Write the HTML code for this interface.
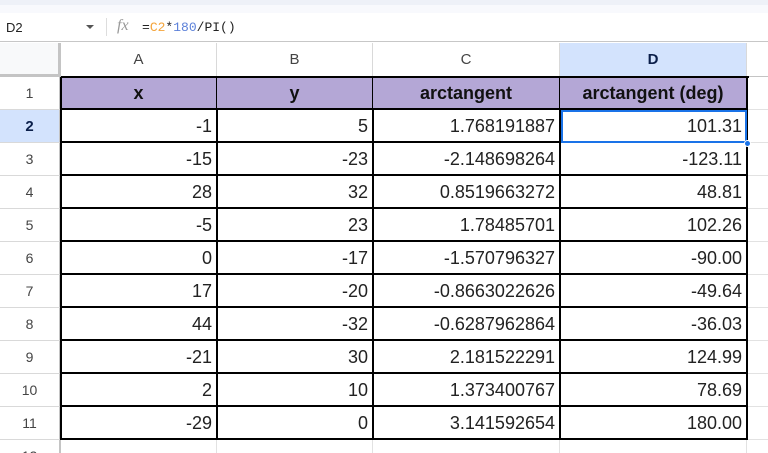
<!DOCTYPE html>
<html style="width:768px;height:453px;overflow:hidden"><head><style>
*{margin:0;padding:0;box-sizing:border-box}
body{width:768px;height:453px;overflow:hidden;background:#fff;font-family:"Liberation Sans",Arial,sans-serif;position:relative}
.a{position:absolute}
.top{left:0;top:0;width:768px;height:5px;background:#eef1f8}
.top2{left:0;top:5px;width:768px;height:8px;background:#f8f9fd}
.fb{left:0;top:13px;width:768px;height:29px;background:#fff;border-bottom:1px solid #c7c7c7}
.ch{top:43px;height:34px;border-right:1px solid #d9d9d9;border-bottom:1px solid #c4c4c4;text-align:center;line-height:34px;font-size:15px;color:#444}
.rh{left:0;width:61px;height:33px;border-bottom:1px solid #d9d9d9;border-right:2px solid #c4c4c4;text-align:center;line-height:33px;font-size:14px;color:#444}
.c{height:33px;border-right:2px solid #000;border-bottom:2px solid #000;text-align:right;padding-right:4px;line-height:33px;font-size:18px;color:#222}
.h{background:#b4a7d6;text-align:center;font-weight:bold;color:#111;padding:0;font-size:18px}
</style></head><body>
<div class="a top"></div><div class="a top2"></div>
<div class="a fb">
<span class="a" style="left:6px;top:7px;font-size:13px;color:#222">D2</span>
<span class="a" style="left:86px;top:12px;width:0;height:0;border-left:4px solid transparent;border-right:4px solid transparent;border-top:4px solid #555"></span>
<span class="a" style="left:106px;top:5px;width:1px;height:18px;background:#ddd"></span>
<span class="a" style="left:117px;top:4px;font-size:16px;font-style:italic;font-family:'Liberation Serif',serif;color:#999">fx</span>
<span class="a" style="left:142px;top:7px;font-size:13px;font-family:'Liberation Mono',monospace;color:#222">=<span style="color:#f4a43a">C2</span>*<span style="color:#5b80d9">180</span>/PI()</span>
</div>
<div class="a" style="left:0;top:43px;width:61px;height:34px;background:#f8f9fa;border-right:3px solid #c4c4c4;border-bottom:3px solid #c4c4c4"></div>
<div class="a ch" style="left:61px;width:156px">A</div>
<div class="a ch" style="left:217px;width:156px">B</div>
<div class="a ch" style="left:373px;width:187px">C</div>
<div class="a ch" style="left:560px;width:187px;background:#d3e3fd;color:#0b1f4a;font-weight:bold">D</div>
<div class="a ch" style="left:747px;width:21px;border-right:none"></div>
<div id="g"></div>
<script>
var d=[["x","y","arctangent","arctangent (deg)"],["-1","5","1.768191887","101.31"],["-15","-23","-2.148698264","-123.11"],["28","32","0.8519663272","48.81"],["-5","23","1.78485701","102.26"],["0","-17","-1.570796327","-90.00"],["17","-20","-0.8663022626","-49.64"],["44","-32","-0.6287962864","-36.03"],["-21","30","2.181522291","124.99"],["2","10","1.373400767","78.69"],["-29","0","3.141592654","180.00"]];
var xs=[61,217,373,560,747],h="";
for(var r=0;r<12;r++){var y=77+r*33;
h+='<div class="a rh" style="top:'+y+'px;'+(r==1?'background:#d3e3fd;color:#0b1f4a;font-weight:bold;font-size:15px':'')+'">'+(r+1)+'</div>';
h+='<div class="a" style="left:747px;top:'+y+'px;width:21px;height:33px;border-bottom:1px solid #e2e2e2"></div>';
if(r<11){for(var c=0;c<4;c++){h+='<div class="a c'+(r==0?' h':'')+'" style="left:'+xs[c]+'px;top:'+y+'px;width:'+(xs[c+1]-xs[c]+1)+'px">'+d[r][c]+'</div>';}}
else{for(var c=0;c<4;c++){h+='<div class="a" style="left:'+xs[c]+'px;top:'+y+'px;width:'+(xs[c+1]-xs[c])+'px;height:33px;border-right:1px solid #e2e2e2"></div>';}}
}
h+='<div class="a" style="left:61px;top:76px;width:688px;height:2px;background:#000"></div>';
h+='<div class="a" style="left:60px;top:77px;width:2px;height:363px;background:#000"></div>';
h+='<div class="a" style="left:561px;top:110px;width:186px;height:33px;border:2px solid #1a73e8"></div>';
h+='<div class="a" style="left:744px;top:140px;width:7px;height:7px;border-radius:50%;background:#1a73e8;border:1px solid #fff"></div>';
document.getElementById("g").innerHTML=h;
</script>
</body></html>
